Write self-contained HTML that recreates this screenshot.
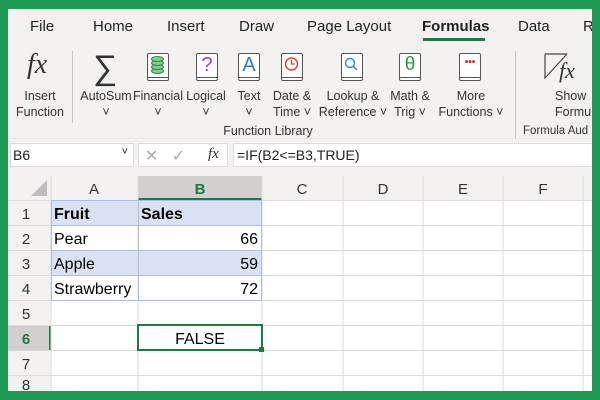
<!DOCTYPE html><html><head><style>
*{margin:0;padding:0;box-sizing:border-box}
body{width:600px;height:400px;background:#1f9a55;position:relative;overflow:hidden;font-family:"Liberation Sans",sans-serif}
.a{position:absolute;white-space:nowrap}
#rib{position:absolute;left:8px;top:9px;width:584px;height:382px;background:#f3f2f1;overflow:hidden}
.tab{position:absolute;top:9px;font-size:15px;color:#222}
.lbl{position:absolute;font-size:12.5px;color:#333;text-align:center;line-height:16px}
.book{position:absolute;top:44px;width:22px;height:28px;border:1.5px solid #555;border-radius:2px;background:#fff}
.book:after{content:"";position:absolute;left:-1px;right:-1px;bottom:2px;border-top:1.2px solid #555}
</style></head><body>
<div id="rib">
<div class="tab" style="left:22px">File</div>
<div class="tab" style="left:85px">Home</div>
<div class="tab" style="left:159px">Insert</div>
<div class="tab" style="left:231px">Draw</div>
<div class="tab" style="left:299px">Page Layout</div>
<div class="tab" style="left:414px;font-weight:bold;color:#222">Formulas</div>
<div class="a" style="left:415px;top:29px;width:62px;height:3px;background:#1e7a43"></div>
<div class="tab" style="left:510px">Data</div>
<div class="tab" style="left:575px">R</div>
<div class="a" style="left:19px;top:40px;font-family:'Liberation Serif',serif;font-style:italic;font-size:28px;color:#333">fx</div>
<div class="lbl" style="left:2px;top:79px;width:60px">Insert<br>Function</div>
<div class="a" style="left:64px;top:42px;width:1px;height:72px;background:#c8c6c4"></div>
<div class="a" style="left:85px;top:42px;font-size:34px;color:#333;line-height:34px">∑</div>
<div class="lbl" style="left:68px;top:79px;width:60px">AutoSum<br>˅</div>
<div class="book" style="left:139px"><svg width="19" height="25" viewBox="0 0 19 25"><g fill="#7fcf8f" stroke="#2e8b47" stroke-width="1"><ellipse cx="9.5" cy="17" rx="6" ry="2.5"/><ellipse cx="9.5" cy="13" rx="6" ry="2.5"/><ellipse cx="9.5" cy="9" rx="6" ry="2.5"/><ellipse cx="9.5" cy="5" rx="6" ry="2.5"/></g></svg></div>
<div class="lbl" style="left:120px;top:79px;width:60px">Financial<br>˅</div>
<div class="book" style="left:188px;color:#a33fc8;font-size:20px;text-align:center;line-height:22px">?</div>
<div class="lbl" style="left:168px;top:79px;width:60px">Logical<br>˅</div>
<div class="book" style="left:230px;color:#2a7fd4;font-size:20px;text-align:center;line-height:22px">A</div>
<div class="lbl" style="left:211px;top:79px;width:60px">Text<br>˅</div>
<div class="book" style="left:273px"><svg width="19" height="25"><circle cx="9.5" cy="10" r="6" fill="none" stroke="#e03c31" stroke-width="1.4"/><path d="M9.5 6v4h3" fill="none" stroke="#e03c31" stroke-width="1.3"/></svg></div>
<div class="lbl" style="left:254px;top:79px;width:60px">Date &amp;<br>Time ˅</div>
<div class="book" style="left:333px"><svg width="19" height="25"><circle cx="8" cy="9" r="4.5" fill="none" stroke="#2a8ad4" stroke-width="1.4"/><path d="M11 12l4 4" stroke="#2a8ad4" stroke-width="1.5"/></svg></div>
<div class="lbl" style="left:307px;top:79px;width:76px">Lookup &amp;<br>Reference ˅</div>
<div class="book" style="left:391px;color:#2e9a4a;font-size:19px;text-align:center;line-height:22px">θ</div>
<div class="lbl" style="left:371px;top:79px;width:62px">Math &amp;<br>Trig ˅</div>
<div class="book" style="left:451px;color:#e02020;font-size:10px;text-align:center;line-height:18px;font-weight:bold">•••</div>
<div class="lbl" style="left:425px;top:79px;width:76px">More<br>Functions ˅</div>
<div class="lbl" style="left:190px;top:114px;width:140px">Function Library</div>
<div class="a" style="left:507px;top:42px;width:1px;height:90px;background:#c8c6c4"></div>
<svg class="a" style="left:535px;top:44px" width="40" height="30"><path d="M2 1h22M2 1v24L24 1" fill="none" stroke="#444" stroke-width="1.2"/><text x="16" y="25" font-family="Liberation Serif" font-style="italic" font-size="22" fill="#333">fx</text></svg>
<div class="lbl" style="left:530px;top:79px;width:60px;text-align:left;padding-left:17px">Show<br>Formulas</div>
<div class="lbl" style="left:515px;top:114px;text-align:left;font-size:11.5px">Formula Aud</div>
<div class="a" style="left:0;top:129px;width:584px;height:36px;background:#f3f2f1;border-top:1px solid #e6e5e4"></div>
<div class="a" style="left:2px;top:134px;width:124px;height:24px;background:#fff;border:1px solid #ddd;font-size:14px;padding:3px 2px;color:#222">B6<span style="position:absolute;right:5px;top:2px;font-size:11px">˅</span></div>
<div class="a" style="left:130px;top:134px;width:90px;height:24px;background:#fff;border:1px solid #ddd;color:#aaa;font-size:16px;padding:2px 6px">✕&nbsp;&nbsp;&nbsp;✓<span style="position:absolute;left:69px;top:2px;color:#333;font-family:'Liberation Serif';font-style:italic;font-size:15px">fx</span></div>
<div class="a" style="left:225px;top:134px;width:362px;height:24px;background:#fff;border:1px solid #ddd;font-size:14px;padding:3px 3px;color:#222">=IF(B2&lt;=B3,TRUE)</div>
<div class="a" style="left:0;top:167px;width:584px;height:215px;background:#fff"></div>
<svg class="a" style="left:0;top:167px" width="584" height="215">
<rect x="0" y="0" width="584" height="24" fill="#f3f2f1"/>
<rect x="0" y="0" width="43" height="215" fill="#f3f2f1"/>
<rect x="130" y="0" width="124" height="24" fill="#d2d0ce"/>
<rect x="130" y="22" width="124" height="2" fill="#1e7a43"/>
<rect x="0" y="149" width="43" height="25" fill="#d2d0ce"/>
<rect x="41" y="149" width="2" height="25" fill="#1e7a43"/>
<path d="M39 4v16H23z" fill="#bdbdbd"/>
<rect x="43" y="24" width="211" height="25" fill="#d9e1f2"/>
<rect x="43" y="74" width="211" height="25" fill="#d9e1f2"/>
<g stroke="#dadada" stroke-width="1">
<path d="M43 0v215M130 0v215M254 0v215M335 0v215M415 0v215M495 0v215M575 0v215"/>
<path d="M0 24.5h584M0 49.5h584M0 74.5h584M0 99.5h584M0 124.5h584M0 149.5h584M0 174.5h584M0 199.5h584"/>
</g>
<g stroke="#a9bfe6" stroke-width="1" fill="none"><path d="M43.5 24.5h210v100h-210zM130.5 24v100M43 49.5h211M43 74.5h211M43 99.5h211"/></g>
<rect x="130" y="149" width="124" height="25" fill="none" stroke="#1e7a43" stroke-width="2"/>
<rect x="251" y="171" width="5" height="5" fill="#1e7a43"/>
<g font-family="Liberation Sans" font-size="15" fill="#333" text-anchor="middle">
<text x="86" y="18">A</text><text x="192" y="18" fill="#1e7a43" font-weight="bold">B</text><text x="294" y="18">C</text><text x="375" y="18">D</text><text x="455" y="18">E</text><text x="535" y="18">F</text>
<text x="18" y="43">1</text><text x="18" y="68">2</text><text x="18" y="93">3</text><text x="18" y="118">4</text><text x="18" y="143">5</text><text x="18" y="168" fill="#1e7a43" font-weight="bold">6</text><text x="18" y="193">7</text><text x="18" y="214">8</text>
</g>
<g font-family="Liberation Sans" font-size="16" fill="#000">
<text x="46" y="43" font-weight="bold">Fruit</text><text x="133" y="43" font-weight="bold">Sales</text>
<text x="46" y="68">Pear</text><text x="46" y="93">Apple</text><text x="46" y="118">Strawberry</text>
<text x="250" y="68" text-anchor="end">66</text><text x="250" y="93" text-anchor="end">59</text><text x="250" y="118" text-anchor="end">72</text>
<text x="192" y="168" text-anchor="middle">FALSE</text>
</g>
</svg>
</div>
</body></html>
